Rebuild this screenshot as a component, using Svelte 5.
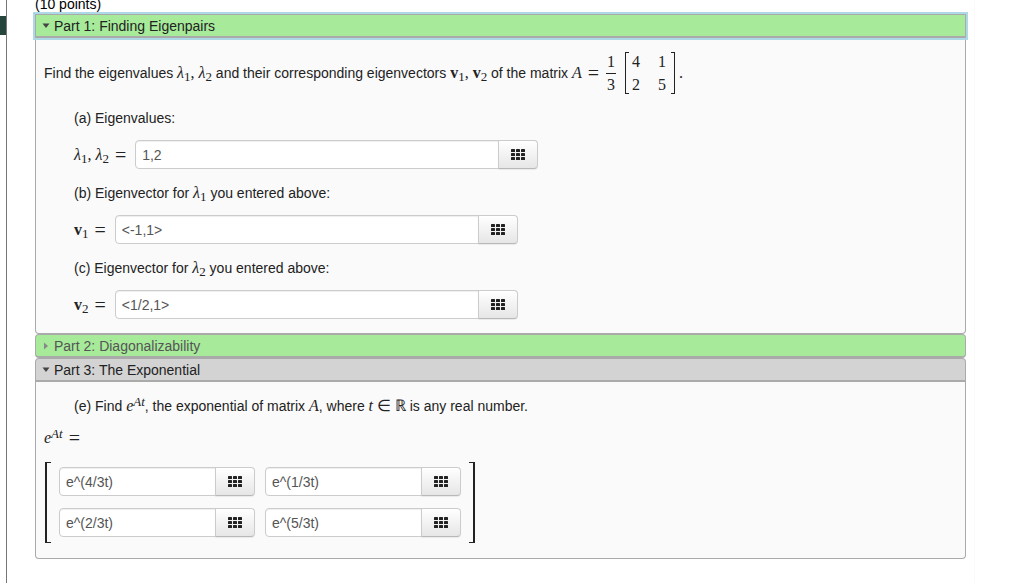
<script>
  let values = $state({
    eigenvalues: '1,2',
    v1: '<-1,1>',
    v2: '<1/2,1>',
    m11: 'e^(4/3t)',
    m12: 'e^(1/3t)',
    m21: 'e^(2/3t)',
    m22: 'e^(5/3t)'
  });
  let open = $state({ one: true, two: false, three: true });

  const cells = [
    ['m11', 'Row 1, column 1'],
    ['m12', 'Row 1, column 2'],
    ['m21', 'Row 2, column 1'],
    ['m22', 'Row 2, column 2']
  ];
</script>

{#snippet lambda(n)}<span class="math"><i>λ</i><sub>{n}</sub></span>{/snippet}
{#snippet vec(n)}<span class="math"><b>v</b><sub>{n}</sub></span>{/snippet}
{#snippet comma()}<span class="math comma">,</span>{/snippet}
{#snippet equals()}<span class="math rel">=</span>{/snippet}
{#snippet expAt()}<span class="math"><i>e</i><sup><i>At</i></sup></span>{/snippet}

{#snippet arrow(isOpen)}
  <svg class="arrow" viewBox="0 0 8 8" aria-hidden="true">
    {#if isOpen}<path d="M0.5 1.5h7L4 6z" />{:else}<path d="M2 0.5v7L6 4z" />{/if}
  </svg>
{/snippet}

{#snippet field(key, label)}
  <span class="group">
    <input id={key} type="text" aria-label={label} bind:value={values[key]} />
    <button type="button" class="pad" aria-label="Equation editor">
      <svg viewBox="0 0 14 11" aria-hidden="true">
        {#each [0, 4, 8] as y}
          {#each [0, 5, 10] as x}
            <rect {x} {y} width="4" height="3" rx="0.6" />
          {/each}
        {/each}
      </svg>
    </button>
  </span>
{/snippet}

<div class="page">
  <aside class="rail"><span class="marker"></span></aside>
  <main>
    <p class="points">(10 points)</p>

    <button type="button" class="header done focused" aria-expanded={open.one} onclick={() => (open.one = !open.one)}>
      {@render arrow(open.one)}Part 1: Finding Eigenpairs
    </button>
    {#if open.one}
      <section class="panel first">
        <div class="intro">
          <span>Find the eigenvalues {@render lambda(1)}{@render comma()}{@render lambda(2)} and their corresponding eigenvectors {@render vec(1)}{@render comma()}{@render vec(2)} of the matrix <i class="math">A</i>{@render equals()}</span>
          <span class="frac math"><span>1</span><span>3</span></span>
          <span class="matrix math"><span>4</span><span>1</span><span>2</span><span>5</span></span>
          <span class="math">.</span>
        </div>
        <div class="question">
          <p>(a) Eigenvalues:</p>
          <div class="answer">
            <label for="eigenvalues">{@render lambda(1)}{@render comma()}{@render lambda(2)}{@render equals()}</label>
            {@render field('eigenvalues', 'Eigenvalues')}
          </div>
        </div>
        <div class="question">
          <p>(b) Eigenvector for {@render lambda(1)} you entered above:</p>
          <div class="answer">
            <label for="v1">{@render vec(1)}{@render equals()}</label>
            {@render field('v1', 'First eigenvector')}
          </div>
        </div>
        <div class="question">
          <p>(c) Eigenvector for {@render lambda(2)} you entered above:</p>
          <div class="answer">
            <label for="v2">{@render vec(2)}{@render equals()}</label>
            {@render field('v2', 'Second eigenvector')}
          </div>
        </div>
      </section>
    {/if}

    <button type="button" class="header done" class:closed={!open.two} aria-expanded={open.two} onclick={() => (open.two = !open.two)}>
      {@render arrow(open.two)}Part 2: Diagonalizability
    </button>

    <button type="button" class="header" aria-expanded={open.three} onclick={() => (open.three = !open.three)}>
      {@render arrow(open.three)}Part 3: The Exponential
    </button>
    {#if open.three}
      <section class="panel last">
        <p class="indent">(e) Find {@render expAt()}, the exponential of matrix <i class="math">A</i>, where <i class="math">t</i> <span class="math">∈</span> <span class="math">ℝ</span> is any real number.</p>
        <p class="lhs">{@render expAt()}{@render equals()}</p>
        <div class="answers">
          {#each cells as [key, label]}
            {@render field(key, label)}
          {/each}
        </div>
      </section>
    {/if}
  </main>
  <div class="edge"></div>
</div>

<style>
  :global(body) {
    margin: 0;
    background: #fff;
  }
  .page {
    display: flex;
    min-height: 100vh;
    font: 14px/20px "Liberation Sans", Arial, sans-serif;
    color: #222;
  }
  .rail {
    width: 6px;
    flex: none;
    border-right: 1px solid #777;
    padding-top: 16px;
  }
  .marker {
    display: block;
    height: 19px;
    background: #26453c;
  }
  main {
    flex: 1;
    min-width: 0;
    padding: 0 8px 0 28px;
  }
  .edge {
    width: 49px;
    flex: none;
    border-left: 1px solid #fafafa;
  }
  p {
    margin: 0;
  }
  .points {
    height: 14px;
    display: flex;
    align-items: flex-end;
    line-height: 20px;
    color: #000;
  }
  .header {
    box-sizing: border-box;
    display: flex;
    align-items: center;
    width: 100%;
    height: 24px;
    padding: 1px 6px 0;
    gap: 4px;
    border: 1px solid #aaa;
    border-bottom-width: 2px;
    border-radius: 4px 4px 0 0;
    background: #d3d3d3;
    font: inherit;
    color: #222;
    text-align: left;
  }
  .header.done {
    background: #a6ea9a;
  }
  .header.closed {
    border-radius: 4px;
    color: #555;
  }
  .header.focused {
    position: relative;
    outline: 2px solid #add8e6;
    border-radius: 0;
  }
  .arrow {
    width: 8px;
    height: 8px;
    flex: none;
    fill: #444;
  }
  .closed .arrow {
    fill: #888;
  }
  .panel {
    border: 1px solid #aaa;
    border-top: 0;
    border-radius: 0 0 4px 4px;
    background: #fafafa;
  }
  .first {
    padding: 10px 8px 14px;
  }
  .last {
    padding: 14px 8px 15px;
  }
  .math {
    font-family: "Liberation Serif", "Times New Roman", serif;
    font-size: 16px;
    white-space: nowrap;
  }
  sub,
  sup {
    font-size: 13px;
    line-height: 0;
  }
  sub {
    vertical-align: -3px;
  }
  sup {
    vertical-align: 5px;
  }
  .comma {
    margin-right: 4px;
  }
  .rel {
    margin-left: 6px;
    font-size: 20px;
    line-height: 0;
    vertical-align: -2px;
  }
  .intro {
    display: flex;
    align-items: center;
    height: 50px;
  }
  .frac {
    display: grid;
    margin: 0 9px 0 7px;
    line-height: 22px;
    text-align: center;
  }
  .frac span {
    width: 10px;
  }
  .frac span + span {
    border-top: 1px solid #222;
  }
  .matrix,
  .answers {
    display: grid;
    width: max-content;
    --line: linear-gradient(#222, #222);
    background:
      var(--line) 0 0 / var(--stem) 100%,
      var(--line) 0 0 / var(--tick) 1px,
      var(--line) 0 100% / var(--tick) 1px,
      var(--line) 100% 0 / var(--stem) 100%,
      var(--line) 100% 0 / var(--tick) 1px,
      var(--line) 100% 100% / var(--tick) 1px;
    background-repeat: no-repeat;
  }
  .matrix {
    --tick: 4px;
    --stem: 1px;
    grid-template-columns: auto auto;
    gap: 4px 18px;
    padding: 0 9px 0 7px;
    margin-right: 4px;
    line-height: 19px;
  }
  .question {
    display: grid;
    gap: 12px;
    margin-top: 10px;
    padding-left: 30px;
  }
  .question + .question {
    margin-top: 14px;
  }
  .question p,
  .indent,
  .lhs {
    height: 20px;
  }
  .answer {
    display: flex;
    align-items: center;
    gap: 9px;
  }
  .group {
    display: flex;
    width: 403px;
    height: 29px;
  }
  input {
    box-sizing: border-box;
    flex: 1;
    min-width: 0;
    padding: 0 6px;
    border: 1px solid #ccc;
    border-radius: 4px 0 0 4px;
    background: #fff;
    box-shadow: inset 0 1px 1px #0001;
    font: inherit;
    color: #555;
  }
  .pad {
    box-sizing: border-box;
    display: flex;
    align-items: center;
    justify-content: center;
    width: 40px;
    margin-left: -1px;
    padding: 0;
    border: 1px solid #ccc;
    border-bottom-color: #b8b8b8;
    border-radius: 0 4px 4px 0;
    background: linear-gradient(#fff, #e6e6e6);
    box-shadow: 0 1px 1px #0001;
  }
  .pad svg {
    width: 14px;
    height: 11px;
    fill: #222;
  }
  .indent {
    padding-left: 30px;
  }
  .lhs {
    margin-top: 12px;
  }
  .answers {
    --tick: 6px;
    --stem: 2px;
    grid-template-columns: auto auto;
    gap: 12px 10px;
    margin-top: 14px;
    margin-left: 1px;
    padding: 5px 14px 6px;
  }
  .answers .group {
    width: 196px;
  }
</style>
